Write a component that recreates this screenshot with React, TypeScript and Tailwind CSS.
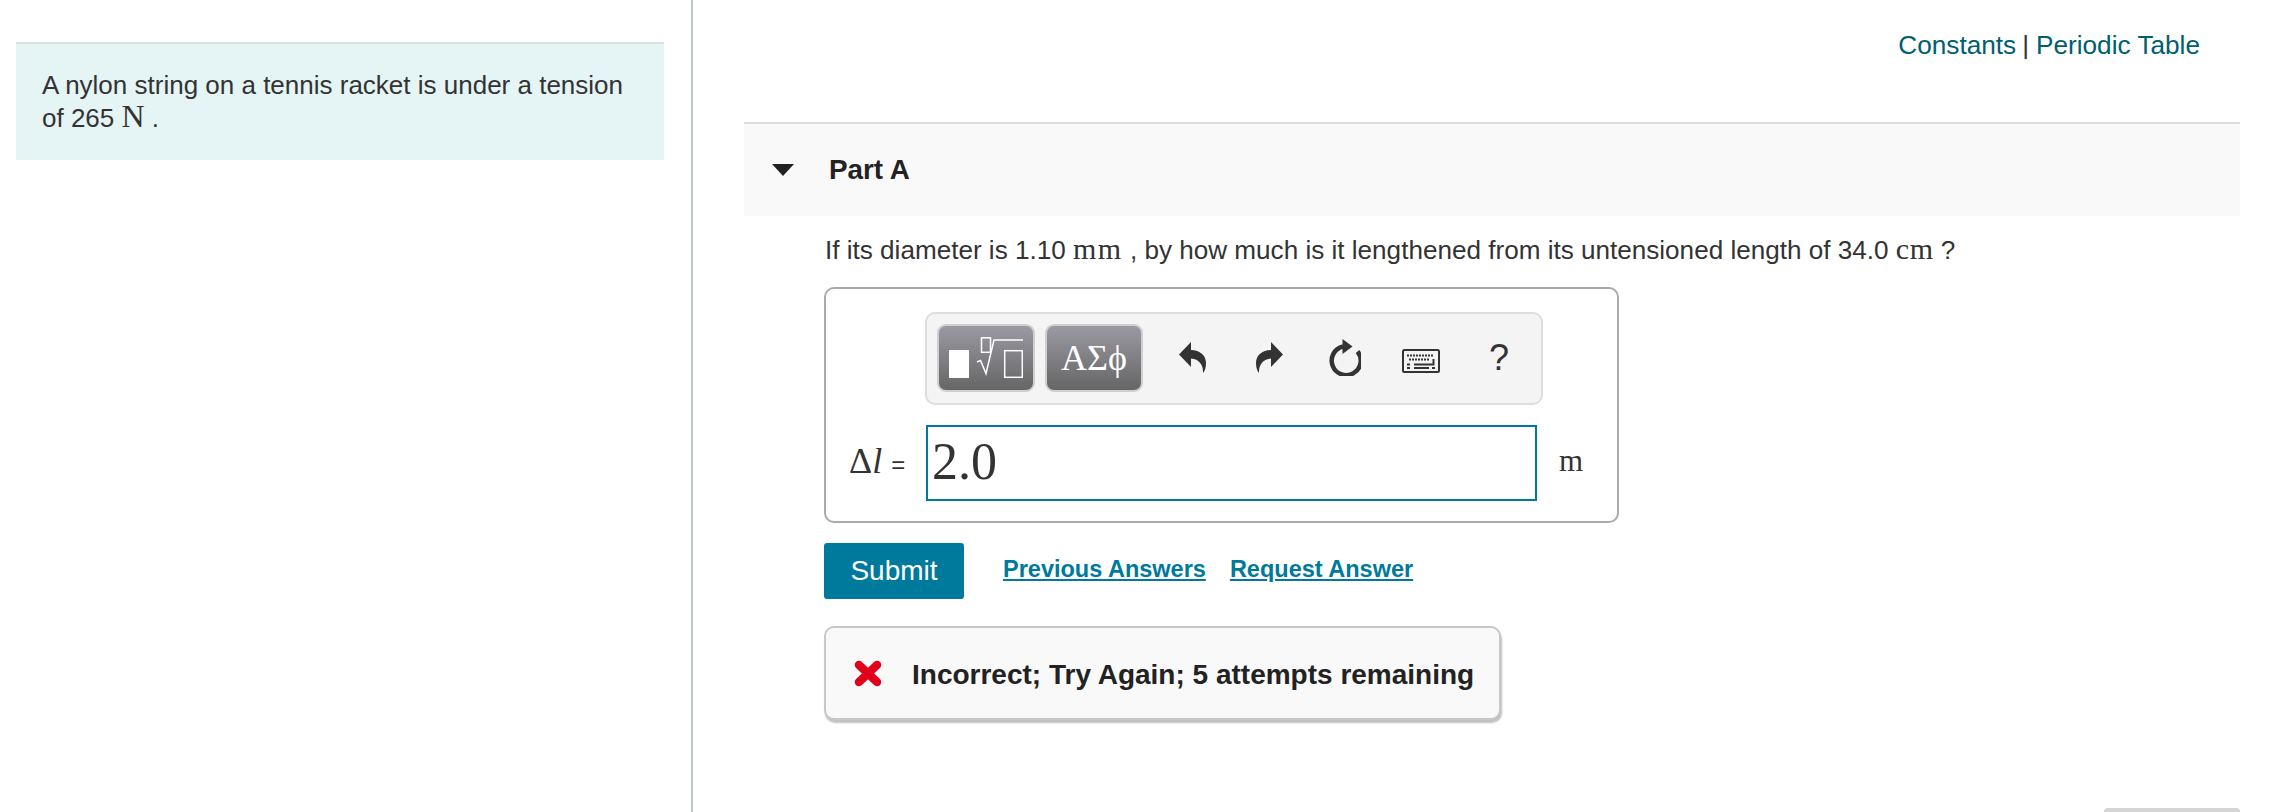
const sans = "font-['Liberation_Sans',Arial,sans-serif]";
const serif = "font-['Liberation_Serif','Times_New_Roman',serif]";

const MathIcon = () => (
  <svg width="74" height="41" viewBox="0 0 74 41" fill="none" stroke="#fff" strokeWidth="1.500">
    <rect x="0" y="13" width="20" height="28" fill="#fff" stroke="none" />
    <rect x="32.500" y="0.800" width="9" height="14.500" />
    <path d="M28 25l3.500-1.500 5.500 13 8-33.500h29" />
    <rect x="55.700" y="13.700" width="17.600" height="26.600" />
  </svg>
);

const Undo = ({ flip }: { flip?: boolean }) => (
  <svg width="27" height="31" viewBox="0 0 27 31" fill="#333" className={flip ? "-scale-x-100" : ""}>
    <path d="M0 12.500 12 0v8c9 .5 15 5 15 13 0 4-1 8-3 10 .5-8-4-14-12-14.500V25z" />
  </svg>
);

const Reload = () => (
  <svg width="33" height="37" viewBox="0 0 33 37" fill="none">
    <path d="M29.500 12.500A14.500 14.500 0 1 1 15 7.500" stroke="#333" strokeWidth="4.500" />
    <path d="M14.500 0l10 7.500-10 7.500z" fill="#333" />
  </svg>
);

const Keyboard = () => (
  <svg width="38" height="24" viewBox="0 0 38 24" fill="none">
    <rect x="1" y="1" width="36" height="22" rx="1.500" fill="#f4f4f4" stroke="#333" strokeWidth="2" />
    <path d="M5 6.500h27M7 10.500h21" stroke="#333" strokeWidth="2" strokeDasharray="2 1" />
    <path d="M31.500 10v5.500H12M5 15.500h3M5 19h3M12 19h15M30 19h3" stroke="#333" strokeWidth="2" />
  </svg>
);

const Toolbar = () => (
  <div className="ml-[99px] flex h-[93px] w-[618px] items-center rounded-[10px] border-2 border-[#dddddd] bg-[#f4f4f4] pb-[2px] pl-[10px]">
    <button className="flex h-[68px] w-[98px] items-center justify-center rounded-[9px] border-2 border-[#cfcfcf] bg-gradient-to-b from-[#9b9aa3] to-[#666666]">
      <MathIcon />
    </button>
    <button className={`ml-[10px] flex h-[68px] w-[98px] items-center justify-center rounded-[9px] border-2 border-[#cfcfcf] bg-gradient-to-b from-[#9b9aa3] to-[#666666] text-[36px] text-white ${serif}`}>
      ΑΣϕ
    </button>
    <div className="ml-[36px]">
      <Undo />
    </div>
    <div className="ml-[50px]">
      <Undo flip />
    </div>
    <div className="ml-[45px]">
      <Reload />
    </div>
    <div className="ml-[41px] mt-[7px]">
      <Keyboard />
    </div>
    <span className={`ml-[49px] text-[36px] text-[#333] ${sans}`}>?</span>
  </div>
);

const App = () => (
  <div className={`flex h-[812px] w-[2280px] overflow-hidden bg-white text-[#333] ${sans}`}>
    {/* left column */}
    <aside className="h-full w-[693px] shrink-0 border-r-2 border-[#b9c8d9] pl-[16px] pr-[27px] pt-[42px]">
      <div className="h-[118px] border-t-2 border-[#dde0e0] bg-[#e5f5f6] pl-[26px] pt-[26px] text-[26px] leading-[30px]">
        A nylon string on a tennis racket is under a tension
        <br />
        of 265 <span className={`text-[32px] leading-none ${serif}`}>N</span> .
      </div>
    </aside>

    {/* right column */}
    <main className="flex h-full flex-1 flex-col pl-[51px] pr-[40px]">
      <div className="flex h-[122px] justify-end pr-[40px] pt-[29px] text-[26.200px] leading-[32px]">
        <a className="text-[#005e6e]">Constants</a>
        <span className="ml-[6px] mr-[7px]">|</span>
        <a className="text-[#005e6e]">Periodic Table</a>
      </div>

      <div className="flex h-[94px] items-center border-t-2 border-[#dddddd] bg-[#f9f9f9] pl-[28px]">
        <span className="h-0 w-0 border-x-[11px] border-t-[12px] border-x-transparent border-t-[#222]" />
        <span className="ml-[35px] text-[27.800px] font-bold text-[#222]">Part A</span>
      </div>

      <div className="pl-[80px] pt-[17px]">
        <p className="ml-px h-[34px] whitespace-nowrap text-[26.100px] leading-[34px]">
          If its diameter is 1.10 <span className={`text-[30px] leading-none tracking-[1.500px] ${serif}`}>mm</span> , by how much is it lengthened from its untensioned length of 34.0 <span className={`text-[30px] leading-none tracking-[0.500px] ${serif}`}>cm</span> ?
        </p>

        <div className="mt-[20px] h-[236px] w-[795px] rounded-[10px] border-2 border-[#aaaaaa] pt-[23px]">
          <Toolbar />
          <div className="mt-[20px] flex h-[76px] items-center">
            <span className={`ml-[23px] w-[77px] whitespace-nowrap pb-[4px] text-[36px] ${serif}`}>
              Δ<i>l</i> <span className={`text-[24px] ${sans}`}>=</span>
            </span>
            <div className={`flex h-[76px] w-[611px] items-center border-2 border-[#007a9c] pb-[2px] pl-[4px] text-[52px] ${serif}`}>
              2.0
            </div>
            <span className={`ml-[22px] pb-[3px] text-[31px] tracking-[1px] ${serif}`}>m</span>
          </div>
        </div>

        <div className="mt-[20px] flex items-start">
          <button className="h-[56px] w-[140px] rounded-[3px] bg-[#007a9c] text-[28px] text-white">Submit</button>
          <a className="ml-[39px] mt-[12px] text-[23.500px] font-bold leading-[28px] text-[#007a9c] underline">Previous Answers</a>
          <a className="ml-[24px] mt-[12px] text-[23.500px] font-bold leading-[28px] text-[#007a9c] underline">Request Answer</a>
        </div>

        <div className="mt-[27px] flex h-[94px] w-[677px] items-center rounded-[10px] border-2 border-[#c8c8c8] bg-[#f9f9f9] pl-[28px] shadow-[1px_3px_2px_#c0c0c0]">
          <svg width="28" height="27" viewBox="0 0 28 27" fill="none" stroke="#e2001a" strokeWidth="8.500" strokeLinecap="round">
            <path d="M5 5l18 17M23 5L5 22" />
          </svg>
          <span className="ml-[30px] whitespace-nowrap pt-[3px] text-[28px] font-bold text-[#222]">Incorrect; Try Again; 5 attempts remaining</span>
        </div>
      </div>

      <div className="mt-auto h-[4px] w-[136px] self-end rounded-t-[4px] bg-[#d5d5d5]" />
    </main>
  </div>
);

export default App;
